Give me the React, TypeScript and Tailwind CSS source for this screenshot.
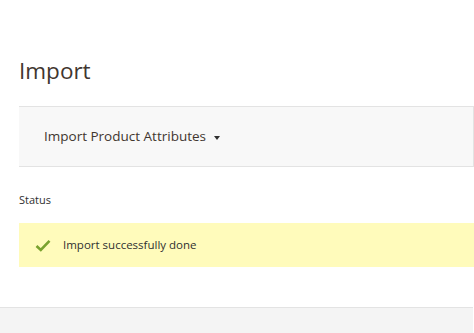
export default function App() {
  return (
    <div className="h-[333px] w-[474px] overflow-hidden bg-white font-['Open_Sans',sans-serif] text-[#303030]">
      <div className="pl-[19px]">
        <h1 className="pt-[56px] text-[22.5px] font-normal leading-[30px] text-[#41362f]">Import</h1>

        {/* entity selector */}
        <div className="mt-[20px] flex h-[61px] w-[455px] items-center border-y border-r border-[#e3e3e3] bg-[#f8f8f8] pl-[25px]">
          <span className="text-[13.5px] text-[#41362f]">Import Product Attributes</span>
          <span className="ml-[8px] mt-[2px] h-0 w-0 border-x-[3.5px] border-t-[4px] border-x-transparent border-t-[#303030]" />
        </div>

        <div className="mt-[26px] text-[11px] leading-[14px] text-[#303030]">Status</div>

        {/* success message */}
        <div className="mt-[16px] flex h-[44px] items-center bg-[#fffbbb] pl-[16px]">
          <svg width="16" height="13" viewBox="0 0 16 13" className="shrink-0">
            <path d="M1.5 7 L5.8 11 L14.5 1.8" fill="none" stroke="#79a22e" strokeWidth="2.6" />
          </svg>
          <span className="ml-[12px] text-[11.5px] text-[#303030]">Import successfully done</span>
        </div>
      </div>

      <div className="mt-[40px] h-[30px] w-[473px] border-t border-[#e3e3e3] bg-[#f4f4f4]" />
    </div>
  );
}
